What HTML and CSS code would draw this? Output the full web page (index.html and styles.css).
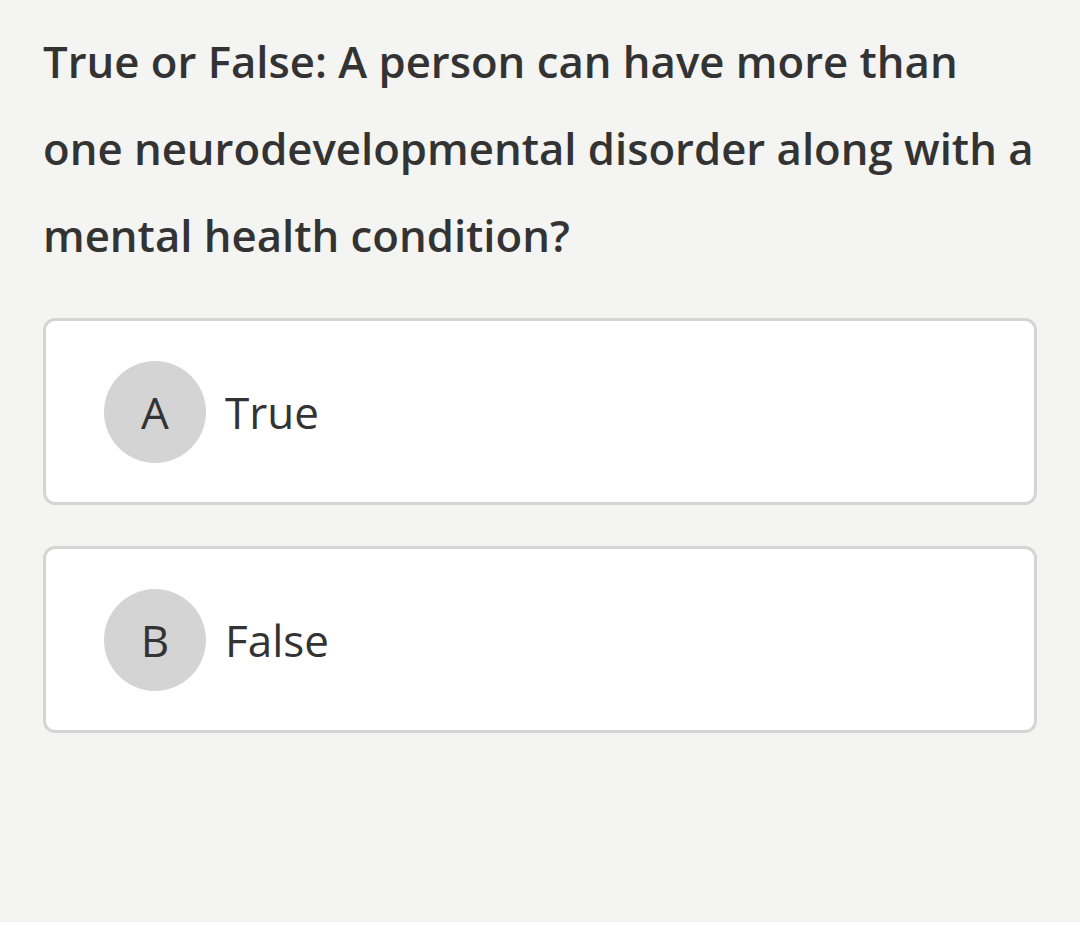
FILE: index.html
```html
<!DOCTYPE html>
<html lang="en">
<head>
    <meta charset="UTF-8">
    <meta name="viewport" content="width=device-width, initial-scale=1.0">
    <title>Quiz</title>
    <link rel="stylesheet" href="styles.css">
</head>
<body>
    <main class="quiz">
        <h1 class="question">True or False: A person can have more than one neurodevelopmental disorder along with a mental health condition?</h1>

        <div class="options">
            <div class="option">
                <span class="letter">A</span>
                <span class="label">True</span>
            </div>
            <div class="option">
                <span class="letter">B</span>
                <span class="label">False</span>
            </div>
        </div>
    </main>
</body>
</html>
```

FILE: styles.css
```css
html {
    background-color: #FFFFFF;
}
body {
    font-family: "Open Sans", Arial, sans-serif;
    background-color: #F4F4F2;
    color: #333333;
    margin: 0;
    padding: 0;
    min-height: 922px;
}
.quiz {
    padding: 18px 43px 0 43px;
}
.question {
    font-size: 43.7px;
    font-weight: 600;
    line-height: 87px;
    margin: 0 -6px 39px 0;
    color: #333333;
}
.options {
    display: flex;
    flex-direction: column;
    gap: 41px;
}
.option {
    display: flex;
    align-items: center;
    gap: 19px;
    background-color: #FFFFFF;
    border: 3px solid #D5D5D5;
    border-radius: 12px;
    padding: 39.5px 58px;
}
.letter {
    width: 102px;
    height: 102px;
    border-radius: 50%;
    background-color: #D4D4D4;
    display: flex;
    align-items: center;
    justify-content: center;
    font-size: 44px;
    flex-shrink: 0;
}
.label {
    font-size: 44px;
}
```
